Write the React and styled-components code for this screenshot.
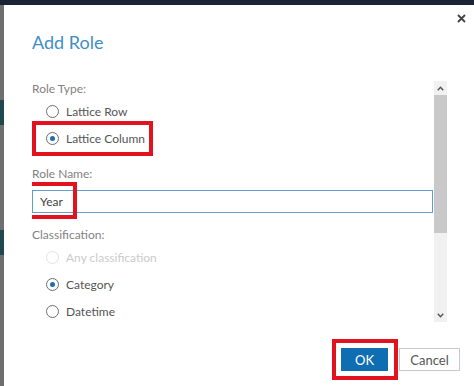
import React from 'react';
import styled, { createGlobalStyle } from 'styled-components';

const GlobalStyle = createGlobalStyle`
  html, body {
    margin: 0;
    padding: 0;
  }
  body {
    font-family: Lato, "Open Sans", sans-serif;
    font-size: 12px;
    color: #333;
  }
`;

const Page = styled.div`
  width: 474px;
  height: 386px;
  box-sizing: border-box;
  padding: 5px 0 0 4px;
  overflow: hidden;
  background:
    linear-gradient(#1b2434, #1b2434) top / 100% 5px no-repeat,
    linear-gradient(
      to bottom,
      #6f6f6f 0,
      #6f6f6f 100px,
      #21474f 100px,
      #21474f 125px,
      #6f6f6f 125px,
      #6f6f6f 230px,
      #21474f 230px,
      #21474f 255px,
      #6f6f6f 255px
    );
  display: flex;
`;

const Dialog = styled.div`
  flex: 1;
  background: #fff;
  display: flex;
  flex-direction: column;
`;

const CloseRow = styled.div`
  display: flex;
  justify-content: flex-end;
  padding: 5px 5px 0 0;
`;

const CloseButton = styled.button`
  width: 16px;
  height: 16px;
  padding: 0;
  border: 0;
  background: transparent;
  display: flex;
  align-items: center;
  justify-content: center;
`;

const Title = styled.h2`
  margin: 5px 0 0 28px;
  font-size: 18px;
  line-height: 22px;
  font-weight: 400;
  color: #3f8fc4;
`;

const ScrollArea = styled.div`
  display: flex;
  height: 241px;
  margin: 28px 27px 0 28px;
`;

const Content = styled.div`
  flex: 1;
  overflow: hidden;
  display: flex;
  flex-direction: column;
`;

const Label = styled.div`
  line-height: 15px;
  color: #828282;
  margin-top: ${(p) => p.$top || 0}px;
`;

const Options = styled.div`
  display: flex;
  flex-direction: column;
  gap: 1px;
  margin-top: 2px;
  padding-left: 14px;
`;

const Option = styled.label`
  display: flex;
  align-items: center;
  gap: 7px;
  height: 26px;
  color: ${(p) => (p.$disabled ? '#cbcbcb' : '#555')};
`;

const RadioCircle = styled.span`
  width: 13px;
  height: 13px;
  box-sizing: border-box;
  border-radius: 50%;
  border: 1px solid ${(p) => (p.$disabled ? '#e2e2e2' : '#6d6d6d')};
  display: flex;
  align-items: center;
  justify-content: center;

  &::after {
    content: '';
    width: 5px;
    height: 5px;
    border-radius: 50%;
    background: ${(p) => (p.$checked ? '#1f6eab' : 'transparent')};
  }
`;

const Annotated = styled.div`
  position: relative;

  &::after {
    content: '';
    position: absolute;
    pointer-events: none;
    border: 4px solid #e2121e;
    top: ${(p) => p.$t}px;
    left: ${(p) => p.$l}px;
    width: ${(p) => p.$w}px;
    height: ${(p) => p.$h}px;
    box-sizing: border-box;
  }
`;

const Input = styled.input`
  display: block;
  width: 100%;
  box-sizing: border-box;
  height: 23px;
  margin: 0;
  padding: 0 7px;
  border: 1px solid #5d9fcd;
  font-family: inherit;
  font-size: 12px;
  color: #444;
  outline: none;
`;

const Scrollbar = styled.div`
  width: 13px;
  margin-left: 1px;
  background: #f1f1f1;
  display: flex;
  flex-direction: column;
`;

const ArrowCell = styled.div`
  height: 14px;
  display: flex;
  align-items: center;
  justify-content: center;
`;

const Thumb = styled.div`
  height: 138px;
  background: #c9c9c9;
`;

const Track = styled.div`
  flex: 1;
`;

const Footer = styled.div`
  display: flex;
  justify-content: flex-end;
  gap: 11px;
  margin-top: 26px;
  padding-right: 14px;
`;

const Button = styled.button`
  height: 23px;
  min-width: ${(p) => p.$width}px;
  padding: 0 10px;
  box-sizing: border-box;
  font-family: inherit;
  font-size: 13px;
  border: 1px solid ${(p) => (p.$primary ? '#0f6db1' : '#c9c9c9')};
  background: ${(p) => (p.$primary ? '#0f6db1' : '#fff')};
  color: ${(p) => (p.$primary ? '#fff' : '#555')};
`;

const Radio = ({ label, checked, disabled }) => (
  <Option $disabled={disabled}>
    <RadioCircle $checked={checked} $disabled={disabled} />
    {label}
  </Option>
);

const Chevron = ({ up }) => (
  <svg width="7" height="5" viewBox="0 0 7 5">
    <path
      d={up ? 'M0.8 4.2 L3.5 1.2 L6.2 4.2' : 'M0.8 0.8 L3.5 3.8 L6.2 0.8'}
      fill="none"
      stroke="#555"
      strokeWidth="1.4"
    />
  </svg>
);

export default function App() {
  return (
    <>
      <GlobalStyle />
      <Page>
        <Dialog>
          <CloseRow>
            <CloseButton aria-label="Close">
              <svg width="9" height="9" viewBox="0 0 9 9">
                <path d="M1 1 L8 8 M8 1 L1 8" stroke="#444" strokeWidth="1.8" />
              </svg>
            </CloseButton>
          </CloseRow>
          <Title>Add Role</Title>

          <ScrollArea>
            <Content>
              <Label>Role Type:</Label>
              <Options>
                <Radio label="Lattice Row" />
                <Annotated $t={-4} $l={-14} $w={121} $h={35}>
                  <Radio label="Lattice Column" checked />
                </Annotated>
              </Options>

              <Label $top={15}>Role Name:</Label>
              <Annotated $t={-8} $l={-8} $w={53} $h={37} style={{ marginTop: 9 }}>
                <Input defaultValue="Year" />
              </Annotated>

              <Label $top={14}>Classification:</Label>
              <Options>
                <Radio label="Any classification" disabled />
                <Radio label="Category" checked />
                <Radio label="Datetime" />
              </Options>
            </Content>

            <Scrollbar>
              <ArrowCell>
                <Chevron up />
              </ArrowCell>
              <Thumb />
              <Track />
              <ArrowCell>
                <Chevron />
              </ArrowCell>
            </Scrollbar>
          </ScrollArea>

          <Footer>
            <Annotated $t={-9} $l={-9} $w={66} $h={41}>
              <Button $primary $width={47}>OK</Button>
            </Annotated>
            <Button $width={61}>Cancel</Button>
          </Footer>
        </Dialog>
      </Page>
    </>
  );
}
